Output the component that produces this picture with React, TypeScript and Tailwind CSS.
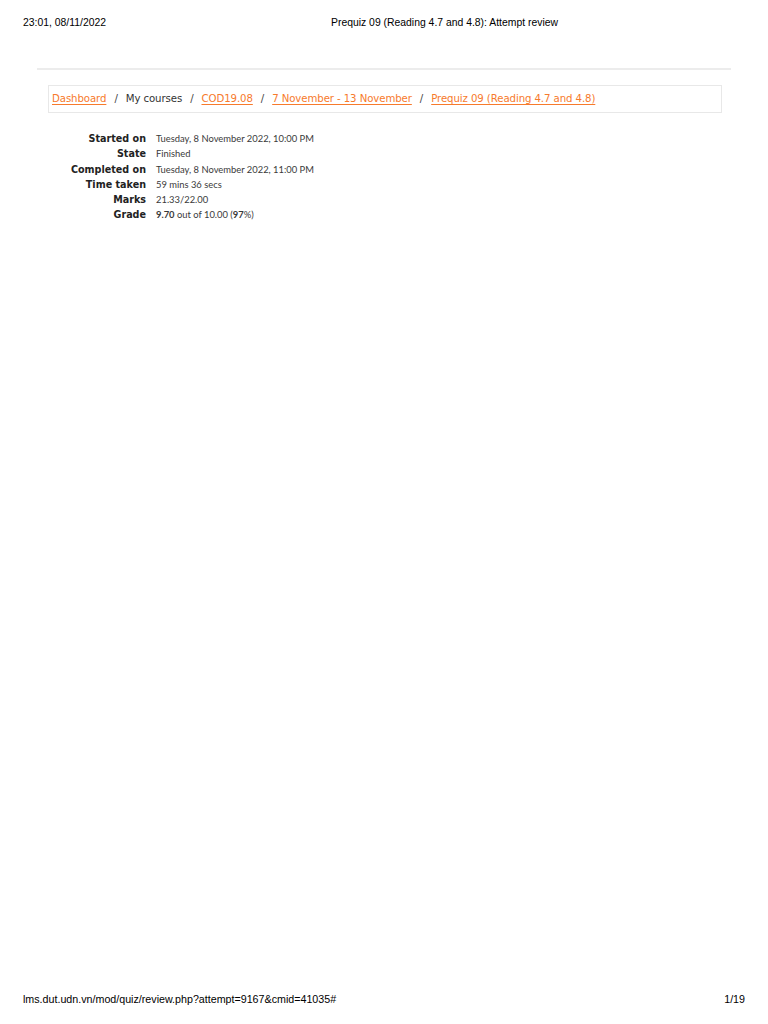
import React from "react";

const rows: { label: string; value: React.ReactNode }[] = [
  { label: "Started on", value: "Tuesday, 8 November 2022, 10:00 PM" },
  { label: "State", value: "Finished" },
  { label: "Completed on", value: "Tuesday, 8 November 2022, 11:00 PM" },
  { label: "Time taken", value: "59 mins 36 secs" },
  { label: "Marks", value: "21.33/22.00" },
  {
    label: "Grade",
    value: (
      <>
        <b className="font-bold">9.70</b> out of 10.00 (<b className="font-bold">97</b>%)
      </>
    ),
  },
];

export default function App() {
  return (
    <div className="w-[768px] h-[1024px] bg-white flex flex-col relative text-[#222]">
      <div
        className="flex px-[23px] pt-[17px] text-[10.4px] leading-[12px] text-black"
        style={{ fontFamily: '"Liberation Sans", Arial, sans-serif' }}
      >
        <span className="w-[308px]">23:01, 08/11/2022</span>
        <span>Prequiz 09 (Reading 4.7 and 4.8): Attempt review</span>
      </div>
      <div className="ml-[37px] w-[694px] mt-[39px] h-[2px] bg-[#ececec]" />
      <div
        className="flex flex-col"
        style={{ fontFamily: '"DejaVu Sans", "Century Gothic", sans-serif' }}
      >
        <div className="ml-[48px] w-[674px] mt-[15px] h-[28px] border border-[#e8e8e8] flex items-center pl-[3px] text-[10.2px] tracking-[-0.1px]">
          <a className="text-[#f77a2c] underline underline-offset-2">Dashboard</a>
          <span className="mx-[8px] text-[#444]">/</span>
          <span className="text-[#333]">My courses</span>
          <span className="mx-[8px] text-[#444]">/</span>
          <a className="text-[#f77a2c] underline underline-offset-2">COD19.08</a>
          <span className="mx-[8px] text-[#444]">/</span>
          <a className="text-[#f77a2c] underline underline-offset-2">7 November - 13 November</a>
          <span className="mx-[8px] text-[#444]">/</span>
          <a className="text-[#f77a2c] underline underline-offset-2">Prequiz 09 (Reading 4.7 and 4.8)</a>
        </div>
        <div className="mt-[18px] grid grid-cols-[146px_1fr] gap-x-[10px] text-[9.6px] leading-[15.3px]">
          {rows.map((r) => (
            <React.Fragment key={r.label}>
              <div className="text-right font-bold text-[#222]">{r.label}</div>
              <div
                className="text-[#3a3a3a] text-[9.4px]"
                style={{ fontFamily: 'Lato, "DejaVu Sans", sans-serif' }}
              >
                {r.value}
              </div>
            </React.Fragment>
          ))}
        </div>
      </div>
      <div className="flex-1" />
      <div
        className="flex justify-between px-[23px] pb-[19px] text-[10.7px] leading-[12px] text-black"
        style={{ fontFamily: '"Liberation Sans", Arial, sans-serif' }}
      >
        <span>lms.dut.udn.vn/mod/quiz/review.php?attempt=9167&amp;cmid=41035#</span>
        <span>1/19</span>
      </div>
    </div>
  );
}
